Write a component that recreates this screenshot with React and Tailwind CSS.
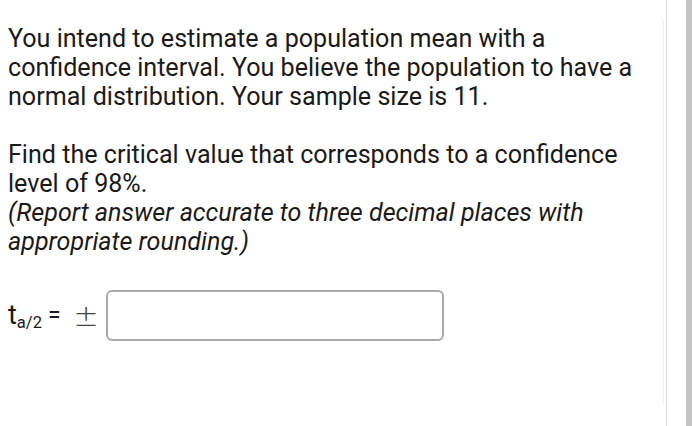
export default function App() {
  return (
    <div className="flex h-[426px] w-[692px] bg-white" style={{ fontFamily: "Roboto, sans-serif" }}>
      <div className="w-[663px] pl-[8px] pt-[24px] text-[25.1px] leading-[29px] text-[#1a1a1a]">
        <p>
          You intend to estimate a population mean with a<br />
          confidence interval. You believe the population to have a<br />
          normal distribution. Your sample size is 11.
        </p>
        <p className="mt-[29px]">
          Find the critical value that corresponds to a confidence<br />
          level of 98%.
        </p>
        <p className="italic">
          (Report answer accurate to three decimal places with<br />
          appropriate rounding.)
        </p>
        <div className="mt-[33px] flex h-[53px] items-center">
          <span className="text-[27px] leading-none">
            t<sub className="text-[16.5px] leading-none">a/2</sub>
          </span>
          <span className="ml-[6px] text-[23px] leading-none">=</span>
          <span
            className="ml-[13px] text-[30px] font-extralight leading-none text-[#444]"
            style={{ fontFamily: '"DejaVu Sans", sans-serif' }}
          >
            ±
          </span>
          <div className="ml-[7px] h-[51px] w-[338px] rounded-[6px] border-2 border-[#a9a9a9]" />
        </div>
      </div>
      <div className="my-[20px] w-px bg-[#f0f0f0]" />
      <div className="ml-[2px] w-px bg-[#dcdcdc]" />
      <div className="flex-1" />
      <div className="w-[6px] bg-[#c4c4c4]" />
    </div>
  );
}
